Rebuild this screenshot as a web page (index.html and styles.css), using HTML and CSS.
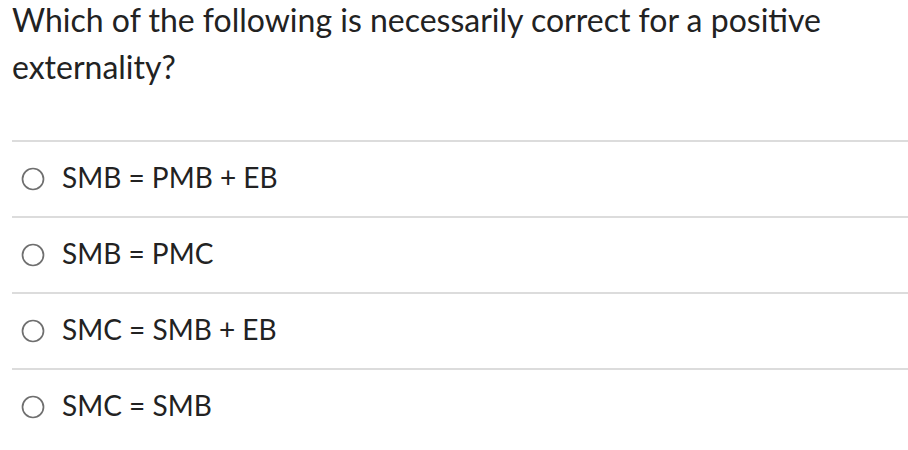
FILE: index.html
```html
<!DOCTYPE html>
<html lang="en">
<head>
<meta charset="utf-8">
<title>Quiz question</title>
<link rel="stylesheet" href="styles.css">
</head>
<body>
<div class="question">
  <div class="prompt">Which of the following is necessarily correct for a positive externality?</div>
  <div class="answers">
    <label class="answer">
      <span class="radio"><svg width="24" height="24" viewBox="0 0 24 24"><circle cx="12" cy="12" r="10.5" fill="#fff" stroke="#6f6f6f" stroke-width="1.7"/></svg></span>
      <span class="answer-text">SMB = PMB + EB</span>
    </label>
    <label class="answer">
      <span class="radio"><svg width="24" height="24" viewBox="0 0 24 24"><circle cx="12" cy="12" r="10.5" fill="#fff" stroke="#6f6f6f" stroke-width="1.7"/></svg></span>
      <span class="answer-text">SMB = PMC</span>
    </label>
    <label class="answer">
      <span class="radio"><svg width="24" height="24" viewBox="0 0 24 24"><circle cx="12" cy="12" r="10.5" fill="#fff" stroke="#6f6f6f" stroke-width="1.7"/></svg></span>
      <span class="answer-text">SMC = SMB + EB</span>
    </label>
    <label class="answer">
      <span class="radio"><svg width="24" height="24" viewBox="0 0 24 24"><circle cx="12" cy="12" r="10.5" fill="#fff" stroke="#6f6f6f" stroke-width="1.7"/></svg></span>
      <span class="answer-text">SMC = SMB</span>
    </label>
  </div>
</div>
</body>
</html>
```
FILE: styles.css
```css
html, body {
  margin: 0;
  padding: 0;
  background: #ffffff;
}
body {
  font-family: Lato, "Noto Sans", sans-serif;
  color: #222222;
  overflow: hidden;
}
.question {
  padding-left: 12px;
  margin-top: -4px;
}
.prompt {
  font-size: 32px;
  line-height: 47px;
  color: #222222;
  padding-bottom: 50px;
}
.answers {
  display: flex;
  flex-direction: column;
}
.answer {
  display: flex;
  align-items: center;
  height: 74px;
  border-top: 2px solid #dcdcdc;
  padding-left: 9px;
}
.radio {
  display: flex;
  width: 24px;
  height: 24px;
  margin-right: 17px;
}
.answer-text {
  font-size: 28px;
  line-height: 34px;
  padding-bottom: 5px;
  color: #222222;
}
```
